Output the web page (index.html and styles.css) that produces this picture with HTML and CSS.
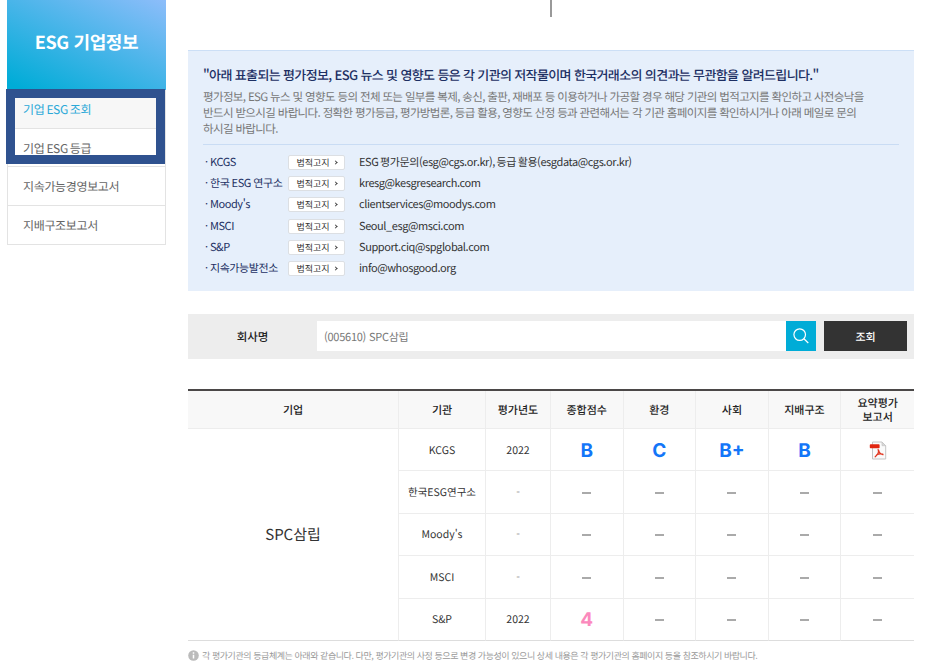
FILE: index.html
```html
<!DOCTYPE html>
<html lang="ko">

<head>
    <meta charset="utf-8">
    <title>ESG 기업정보</title>
    <link rel="stylesheet" href="styles.css">
</head>

<body>
    <div class="top-line"></div>
    <div id="container">
        <aside class="sidebar">
            <h2><span>ESG 기업정보</span></h2>
            <ul class="menu">
                <li class="on"><a>기업 ESG 조회</a></li>
                <li><a>기업 ESG 등급</a></li>
                <li><a>지속가능경영보고서</a></li>
                <li><a>지배구조보고서</a></li>
            </ul>
            <div class="highlight"></div>
        </aside>

        <main>
            <section class="notice">
                <h3>"아래 표출되는 평가정보, ESG 뉴스 및 영향도 등은 각 기관의 저작물이며 한국거래소의 의견과는 무관함을 알려드립니다."</h3>
                <p>
                    평가정보, ESG 뉴스 및 영향도 등의 전체 또는 일부를 복제, 송신, 출판, 재배포 등 이용하거나 가공할 경우 해당 기관의 법적고지를 확인하고 사전승낙을<br>
                    반드시 받으시길 바랍니다. 정확한 평가등급, 평가방법론, 등급 활용, 영향도 산정 등과 관련해서는 각 기관 홈페이지를 확인하시거나 아래 메일로 문의<br>
                    하시길 바랍니다.
                </p>
                <ul class="contacts">
                    <li><b>· KCGS</b><a class="legal">법적고지<i></i></a><span>ESG 평가문의(esg@cgs.or.kr), 등급 활용(esgdata@cgs.or.kr)</span></li>
                    <li><b>· 한국 ESG 연구소</b><a class="legal">법적고지<i></i></a><span>kresg@kesgresearch.com</span></li>
                    <li><b>· Moody's</b><a class="legal">법적고지<i></i></a><span>clientservices@moodys.com</span></li>
                    <li><b>· MSCI</b><a class="legal">법적고지<i></i></a><span>Seoul_esg@msci.com</span></li>
                    <li><b>· S&amp;P</b><a class="legal">법적고지<i></i></a><span>Support.ciq@spglobal.com</span></li>
                    <li><b>· 지속가능발전소</b><a class="legal">법적고지<i></i></a><span>info@whosgood.org</span></li>
                </ul>
            </section>

            <form class="search">
                <label>회사명</label>
                <div class="field">(005610) SPC삼립</div>
                <div class="search-icon">
                    <svg width="16" height="16" viewBox="0 0 16 16" fill="none" stroke="#fff" stroke-width="1.2">
                        <circle cx="6.7" cy="6.6" r="5.8" />
                        <path d="M10.9 10.8L15.3 15" />
                    </svg>
                </div>
                <div class="submit">조회</div>
            </form>

            <table>
                <colgroup>
                    <col class="c-company"><col class="c-org"><col class="c-year">
                    <col class="c-total"><col class="c-grade"><col class="c-grade"><col class="c-grade"><col class="c-report">
                </colgroup>
                <thead>
                    <tr>
                        <th>기업</th>
                        <th>기관</th>
                        <th>평가년도</th>
                        <th>종합점수</th>
                        <th>환경</th>
                        <th>사회</th>
                        <th>지배구조</th>
                        <th>요약평가<br>보고서</th>
                    </tr>
                </thead>
                <tbody>
                    <tr>
                        <td class="company" rowspan="5">SPC삼립</td>
                        <td>KCGS</td>
                        <td>2022</td>
                        <td class="grade">B</td>
                        <td class="grade">C</td>
                        <td class="grade">B+</td>
                        <td class="grade">B</td>
                        <td>
                            <svg class="pdf" width="18" height="19" viewBox="0 0 18 19">
                                <path d="M3.5 1H13L16.7 4.7V18H3.5Z" fill="#fafafa" stroke="#c4c4c4" />
                                <path d="M13 1V4.7H16.7Z" fill="#d8d8d8" stroke="#c4c4c4" stroke-width=".7" />
                                <rect x=".8" y="3.2" width="9.8" height="4" rx=".8" fill="#e1250f" />
                                <path d="M9.1 8.6C10.2 11.2 9 13.5 6.2 15.8M9.6 9.2C10.1 11.9 11.2 13.3 14 13.7M7.9 13.6C9.6 12.7 11.5 12.6 13.8 13.1" fill="none" stroke="#e1351f" stroke-width="1.2" stroke-linecap="round" />
                            </svg>
                        </td>
                    </tr>
                    <tr>
                        <td>한국ESG연구소</td>
                        <td class="none">-</td>
                        <td><i class="dash"></i></td>
                        <td><i class="dash"></i></td>
                        <td><i class="dash"></i></td>
                        <td><i class="dash"></i></td>
                        <td><i class="dash"></i></td>
                    </tr>
                    <tr>
                        <td>Moody's</td>
                        <td class="none">-</td>
                        <td><i class="dash"></i></td>
                        <td><i class="dash"></i></td>
                        <td><i class="dash"></i></td>
                        <td><i class="dash"></i></td>
                        <td><i class="dash"></i></td>
                    </tr>
                    <tr>
                        <td>MSCI</td>
                        <td class="none">-</td>
                        <td><i class="dash"></i></td>
                        <td><i class="dash"></i></td>
                        <td><i class="dash"></i></td>
                        <td><i class="dash"></i></td>
                        <td><i class="dash"></i></td>
                    </tr>
                    <tr>
                        <td>S&amp;P</td>
                        <td>2022</td>
                        <td class="grade pink">4</td>
                        <td><i class="dash"></i></td>
                        <td><i class="dash"></i></td>
                        <td><i class="dash"></i></td>
                        <td><i class="dash"></i></td>
                    </tr>
                </tbody>
            </table>

            <p class="footnote">
                <svg width="11" height="11" viewBox="0 0 11 11">
                    <circle cx="5.5" cy="5.5" r="5.3" fill="#bbb" />
                    <path d="M5.5 2.3V3.7M5.5 4.7V8.6" stroke="#fff" stroke-width="1.5" />
                </svg>
                <span>각 평가기관의 등급체계는 아래와 같습니다. 다만, 평가기관의 사정 등으로 변경 가능성이 있으니 상세 내용은 각 평가기관의 홈페이지 등을 참조하시기 바랍니다.</span>
            </p>
        </main>
    </div>
</body>

</html>
```

FILE: styles.css
```css
* {
    box-sizing: border-box;
}

body {
    margin: 0;
    height: 664px;
    overflow: hidden;
    position: relative;
    background: #fff;
    color: #333;
    font-family: "Noto Sans CJK KR", sans-serif;
    font-size: 11px;
    text-rendering: geometricPrecision;
}

h2, h3, p, ul {
    margin: 0;
    padding: 0;
}

ul {
    list-style: none;
}

/* divider hanging from the top menu */
.top-line {
    position: absolute;
    left: 550px;
    top: 0;
    width: 2px;
    height: 17px;
    background: #999;
}

#container {
    display: flex;
    align-items: flex-start;
    padding-left: 7px;
}

.sidebar {
    position: relative;
    width: 159px;
    margin-right: 22px;
}

.sidebar h2 {
    display: flex;
    align-items: center;
    justify-content: center;
    height: 90px;
    padding-bottom: 7px;
    background: linear-gradient(26deg, #00acd7 5%, #8dbdfa 100%);
    color: #fff;
    font-size: 18px;
    font-weight: 700;
    letter-spacing: -0.4px;
}

.menu {
    border: 1px solid #e3e3e3;
    border-top: none;
}

.menu li {
    height: 38.6px;
    padding-left: 15px;
    border-bottom: 1px solid #e3e3e3;
    color: #666;
    font-size: 12px;
    line-height: 40px;
    letter-spacing: -0.35px;
    word-spacing: -1px;
}

.menu li:last-child {
    border-bottom: none;
}

.menu .on {
    background: #f7f7f7;
    color: #2ba9d8;
}

.highlight {
    position: absolute;
    left: -1px;
    top: 89px;
    width: 159px;
    height: 75px;
    border: 9px solid #2f528f;
}

main {
    width: 726px;
    padding-top: 50px;
}

.notice {
    height: 241px;
    padding: 12px 15px 0;
    border-top: 1px solid #ccdff6;
    background: #e6effb;
}

.notice h3 {
    height: 23px;
    color: #1d2f63;
    font-size: 13px;
    font-weight: 500;
    line-height: 24px;
    white-space: nowrap;
    letter-spacing: -0.64px;
}

.notice p {
    height: 59px;
    padding-top: 3px;
    border-bottom: 1px solid #c9dcf4;
    color: #777;
    font-size: 11.5px;
    line-height: 16px;
    white-space: nowrap;
    letter-spacing: -0.64px;
}

.contacts {
    padding-top: 6px;
}

.contacts li {
    display: flex;
    align-items: center;
    height: 21.3px;
    letter-spacing: -0.41px;
    word-spacing: -1px;
    white-space: nowrap;
}

.contacts b {
    width: 85px;
    padding-left: 2px;
    color: #1d2f63;
    font-weight: 400;
    word-spacing: -0.4px;
}

.legal {
    display: flex;
    align-items: center;
    justify-content: center;
    width: 57px;
    height: 15px;
    margin: 1px 14px 0 0;
    border: 1px solid #dcdfe3;
    border-radius: 2px;
    background: #fff;
    color: #333;
    font-size: 9px;
    letter-spacing: 0;
}

.legal i {
    width: 3px;
    height: 3px;
    margin-left: 4px;
    border-top: 1px solid #444;
    border-right: 1px solid #444;
    transform: rotate(45deg);
}

.search {
    display: flex;
    align-items: flex-start;
    height: 45px;
    margin-top: 23px;
    padding: 7px 7px 0 0;
    background: #ededed;
    line-height: 32px;
}

.search label {
    width: 129px;
    color: #222;
    font-size: 11.5px;
    font-weight: 500;
    text-align: center;
}

.field {
    flex: 1;
    height: 30px;
    padding-left: 7px;
    background: #fff;
    color: #777;
    letter-spacing: -0.25px;
}

.search-icon {
    display: flex;
    align-items: center;
    justify-content: center;
    width: 30px;
    height: 30px;
    margin-right: 8px;
    background: #00acd7;
}

.submit {
    width: 83px;
    height: 30px;
    background: #333;
    color: #fff;
    font-weight: 500;
    text-align: center;
}

table {
    width: 726px;
    margin-top: 30px;
    border-top: 2px solid #4b4848;
    border-spacing: 0;
    table-layout: fixed;
}

.c-company { width: 210px; }
.c-org { width: 87px; }
.c-year { width: 65px; }
.c-total { width: 72.5px; }
.c-grade { width: 72.6px; }
.c-report { width: 73.7px; }

th, td {
    padding: 0;
    border-left: 1px solid #ededed;
    border-bottom: 1px solid #ededed;
    text-align: center;
}

th:first-child, .company {
    border-left: none;
}

th {
    height: 38px;
    background: #f8f8f8;
    color: #222;
    font-weight: 500;
    line-height: 14px;
}

td {
    height: 42.4px;
    padding-top: 2px;
    font-size: 10.5px;
    line-height: 20px;
}

.company, tbody tr:last-child td {
    border-bottom-color: #ddd;
}

.company {
    font-size: 15px;
}

.grade {
    color: #1476f8;
    font-family: Inter, sans-serif;
    font-size: 19px;
    font-weight: 700;
}

.pink {
    color: #fb89bd;
}

.none {
    color: #888;
}

.dash {
    display: block;
    width: 9px;
    height: 2px;
    margin: 0 auto;
    background: #aaa;
}

.pdf {
    display: block;
    margin: 0 auto;
}

.footnote {
    display: flex;
    align-items: center;
    gap: 3px;
    height: 20px;
    margin-top: 5px;
    color: #999;
    font-size: 9px;
    letter-spacing: -0.44px;
    white-space: nowrap;
}
```
